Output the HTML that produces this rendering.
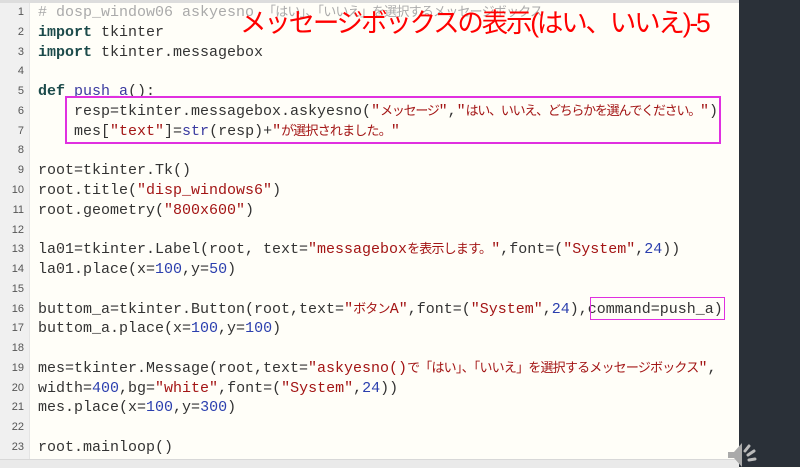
<!DOCTYPE html>
<html><head><meta charset="utf-8"><style>
body{margin:0;width:800px;height:467px;overflow:hidden;background:#fffef8;position:relative;font-family:"Liberation Mono","Noto Sans CJK JP",monospace;}
#top{position:absolute;left:0;top:0;width:739px;height:3px;background:#ddd}
#gut{position:absolute;left:0;top:3px;width:29px;height:456px;background:#f0f0f0;border-right:1px solid #e4e4e4}
#dark{position:absolute;left:739px;top:0;width:61px;height:467px;background:#2a3038}
#bot{position:absolute;left:0;top:459px;width:739px;height:8px;background:#eaeaea;border-top:1px solid #d8d8d8}
.n{position:absolute;left:0;width:24px;text-align:right;font:11px "Liberation Sans",sans-serif;color:#555;line-height:19.77px}
.l{position:absolute;left:38px;font-size:15px;line-height:19.77px;height:19.77px;white-space:pre;color:#333}
.k{color:#1b4a4a;font-weight:bold}.s{color:#a31515}.m{color:#2b3fae}.c{color:#aaa}.f{color:#3a3aa0}
.cj{font-family:"Noto Sans CJK JP",sans-serif;font-size:13px;line-height:0;letter-spacing:-0.8px}
.t6 .cj{letter-spacing:-1.25px}
#title{position:absolute;left:240px;top:5px;color:#f00;font:26.5px "Liberation Sans","Noto Sans CJK JP",sans-serif;letter-spacing:-2.2px;white-space:nowrap;line-height:36px}
.box{position:absolute;border:2px solid #e030e0}
</style></head><body>
<div id="top"></div><div id="gut"></div><div id="dark"></div><div id="bot"></div>
<div class="n" style="top:3px">1</div><div class="n" style="top:22.8px">2</div><div class="n" style="top:42.5px">3</div><div class="n" style="top:62.3px">4</div><div class="n" style="top:82.1px">5</div><div class="n" style="top:101.9px">6</div><div class="n" style="top:121.6px">7</div><div class="n" style="top:141.4px">8</div><div class="n" style="top:161.2px">9</div><div class="n" style="top:180.9px">10</div><div class="n" style="top:200.7px">11</div><div class="n" style="top:220.5px">12</div><div class="n" style="top:240.2px">13</div><div class="n" style="top:260px">14</div><div class="n" style="top:279.8px">15</div><div class="n" style="top:299.6px">16</div><div class="n" style="top:319.3px">17</div><div class="n" style="top:339.1px">18</div><div class="n" style="top:358.9px">19</div><div class="n" style="top:378.6px">20</div><div class="n" style="top:398.4px">21</div><div class="n" style="top:418.2px">22</div><div class="n" style="top:437.9px">23</div>
<div class="l c" style="top:3px"># dosp_window06 askyesno <span class="cj">「はい」、「いいえ」を選択するメッセージボックス</span></div>
<div class="l" style="top:22.8px"><span class="k">import</span> tkinter</div>
<div class="l" style="top:42.5px"><span class="k">import</span> tkinter.messagebox</div>
<div class="l" style="top:82.1px"><span class="k">def</span> <span class="f" style="text-decoration:underline">push_a</span>():</div>
<div class="l t6" style="top:101.9px">    resp=tkinter.messagebox.askyesno(<span class="s">"<span class="cj">メッセージ</span>"</span>,<span class="s">"<span class="cj">はい、いいえ、どちらかを選んでください。</span>"</span>)</div>
<div class="l" style="top:121.6px">    mes[<span class="s">"text"</span>]=<span class="f">str</span>(resp)+<span class="s">"<span class="cj">が選択されました。</span>"</span></div>
<div class="l" style="top:161.2px">root=tkinter.Tk()</div>
<div class="l" style="top:180.9px">root.title(<span class="s">"disp_windows6"</span>)</div>
<div class="l" style="top:200.7px">root.geometry(<span class="s">"800x600"</span>)</div>
<div class="l" style="top:240.2px">la01=tkinter.Label(root, text=<span class="s">"messagebox<span class="cj">を表示します。</span>"</span>,font=(<span class="s">"System"</span>,<span class="m">24</span>))</div>
<div class="l" style="top:260px">la01.place(x=<span class="m">100</span>,y=<span class="m">50</span>)</div>
<div class="l" style="top:299.6px">buttom_a=tkinter.Button(root,text=<span class="s">"<span class="cj">ボタン</span>A"</span>,font=(<span class="s">"System"</span>,<span class="m">24</span>),command=push_a)</div>
<div class="l" style="top:319.3px">buttom_a.place(x=<span class="m">100</span>,y=<span class="m">100</span>)</div>
<div class="l" style="top:358.9px">mes=tkinter.Message(root,text=<span class="s">"askyesno()<span class="cj">で「はい」、「いいえ」を選択するメッセージボックス</span>"</span>,</div>
<div class="l" style="top:378.6px">width=<span class="m">400</span>,bg=<span class="s">"white"</span>,font=(<span class="s">"System"</span>,<span class="m">24</span>))</div>
<div class="l" style="top:398.4px">mes.place(x=<span class="m">100</span>,y=<span class="m">300</span>)</div>
<div class="l" style="top:437.9px">root.mainloop()</div>
<div id="title">メッセージボックスの表示(はい、いいえ)-5</div>
<div class="box" style="left:65px;top:96px;width:652px;height:44px"></div>
<div class="box" style="left:590px;top:297px;width:133px;height:21px;border-width:1px"></div>
<svg style="position:absolute;left:725px;top:438px" width="40" height="29"><path d="M3 14h6l8-9v24l-8-9H3z" fill="#aaa"/><path d="M20 13l4-5M23 17l6-4M24 22l6-1" stroke="#bbb" stroke-width="3" stroke-linecap="round"/></svg>
</body></html>
